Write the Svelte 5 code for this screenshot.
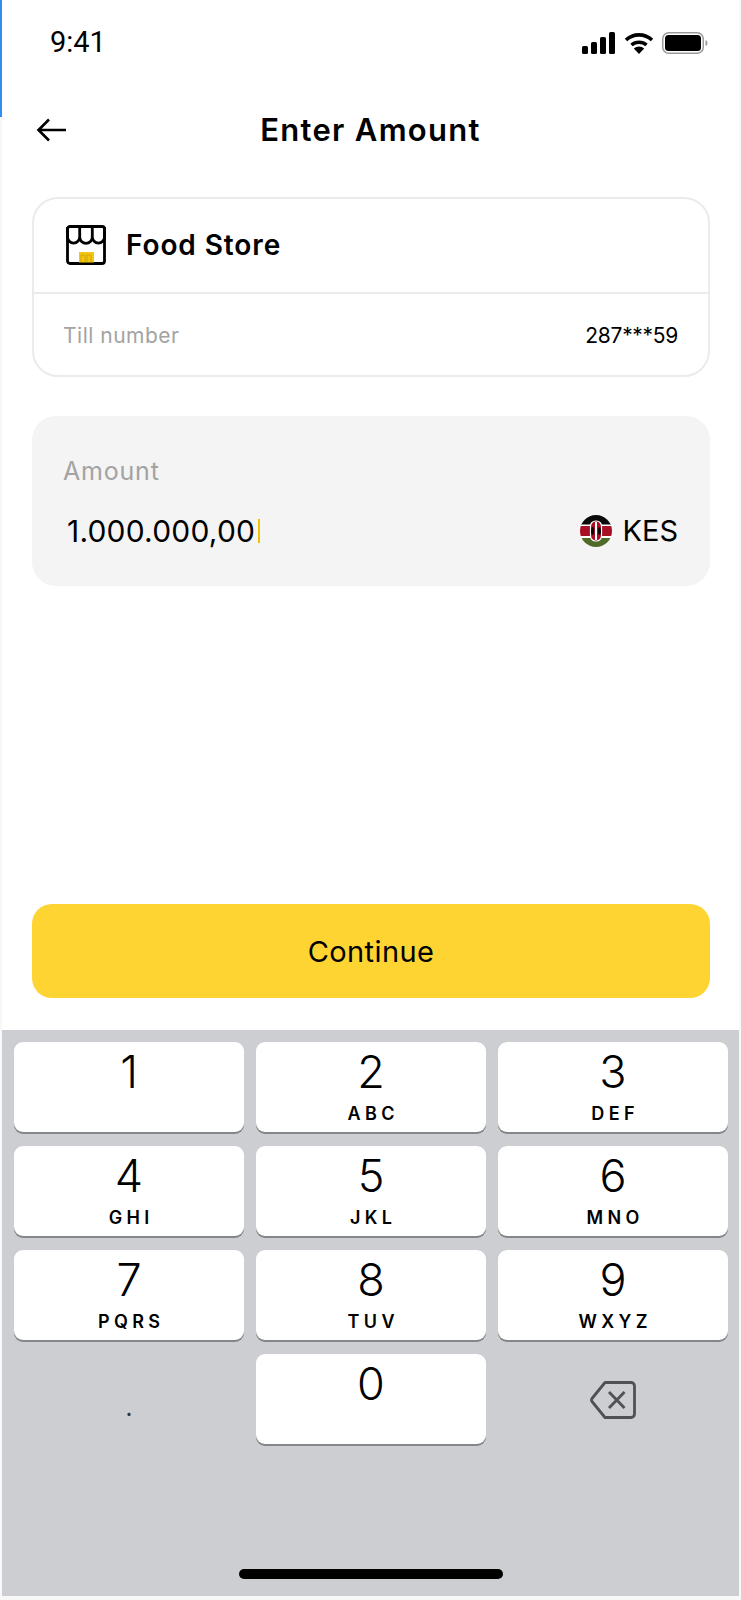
<script>
    // Keypad rows: digit + letters underneath
    const keys = [
        { n: '1', l: '' },
        { n: '2', l: 'ABC' },
        { n: '3', l: 'DEF' },
        { n: '4', l: 'GHI' },
        { n: '5', l: 'JKL' },
        { n: '6', l: 'MNO' },
        { n: '7', l: 'PQRS' },
        { n: '8', l: 'TUV' },
        { n: '9', l: 'WXYZ' }
    ];
</script>

<div class="screen">
    <div class="strip"></div>
    <div class="page">
        <div class="status">
            <span class="time">9:41</span>
            <div class="status-icons">
                <svg width="34" height="22" viewBox="0 0 34 22">
                    <rect x="0" y="14" width="6" height="8" rx="1.5" fill="#000" />
                    <rect x="9" y="10" width="6" height="12" rx="1.5" fill="#000" />
                    <rect x="18" y="5" width="6" height="17" rx="1.5" fill="#000" />
                    <rect x="27" y="0" width="6" height="22" rx="1.5" fill="#000" />
                </svg>
                <svg width="30" height="22" viewBox="0 0 30 22">
                    <path d="M2 8 A19 19 0 0 1 28 8" fill="none" stroke="#000" stroke-width="3.6" />
                    <path d="M7.5 13 A11.5 11.5 0 0 1 22.5 13" fill="none" stroke="#000" stroke-width="3.6" />
                    <path d="M15 22 L9.8 16.6 A7.5 7.5 0 0 1 20.2 16.6 Z" fill="#000" />
                </svg>
                <svg width="46" height="22" viewBox="0 0 46 22">
                    <rect x="0.75" y="0.75" width="40.5" height="20.5" rx="6" fill="none" stroke="#9a9a9a" stroke-width="1.5" />
                    <rect x="3" y="3" width="36" height="16" rx="3.5" fill="#000" />
                    <path d="M43.5 8 C45 8.5 45.5 9.5 45.5 11 C45.5 12.5 45 13.5 43.5 14 Z" fill="#9a9a9a" />
                </svg>
            </div>
        </div>

        <div class="nav">
            <svg class="back" width="32" height="26" viewBox="0 0 32 26">
                <path d="M30 13 H3 M13 2.5 L2.5 13 L13 23.5" fill="none" stroke="#000" stroke-width="2.6" />
            </svg>
            <h1>Enter Amount</h1>
        </div>

        <div class="content">
            <div class="card">
                <div class="store">
                    <svg width="40" height="40" viewBox="0 0 40 40">
                        <rect x="1.5" y="1.5" width="37" height="37" rx="2.5" fill="#fff" stroke="#000" stroke-width="2.8" />
                        <path d="M1.5 2 V12 A6.1 6.1 0 0 0 13.7 12 V2 M13.7 12 A6.1 6.1 0 0 0 26.3 12 V2 M26.3 12 A6.1 6.1 0 0 0 38.5 12 V2" fill="none" stroke="#000" stroke-width="2.8" />
                        <rect x="13" y="27" width="15" height="10.5" fill="#f2c613" />
                        <path d="M15 37 V30 H19 V37 M21 37 V30 H25 V37" fill="none" stroke="#c9a000" stroke-width="0.8" />
                    </svg>
                    <span class="store-name">Food Store</span>
                </div>
                <div class="till">
                    <span class="till-label">Till number</span>
                    <span class="till-value">287***59</span>
                </div>
            </div>

            <div class="amount-box">
                <div class="amount-label">Amount</div>
                <div class="amount-row">
                    <div class="amount-value">1.000.000,00<span class="caret"></span></div>
                    <div class="currency">
                        <svg width="32" height="32" viewBox="0 0 32 32">
                            <defs>
                                <clipPath id="flag-clip"><circle cx="16" cy="16" r="16" /></clipPath>
                            </defs>
                            <g clip-path="url(#flag-clip)">
                                <rect width="32" height="10" fill="#0a0a0a" />
                                <rect y="9.5" width="32" height="13.5" fill="#fff" />
                                <rect y="11" width="32" height="10" fill="#a80f24" />
                                <rect y="23" width="32" height="9" fill="#4f6b2a" />
                                <rect x="10.5" y="6" width="11" height="20" rx="5" fill="#a80f24" stroke="#fff" stroke-width="1.2" />
                                <ellipse cx="12.5" cy="16" rx="1.5" ry="4" fill="#0a0a0a" />
                                <ellipse cx="19.5" cy="16" rx="1.5" ry="4" fill="#0a0a0a" />
                                <rect x="15" y="7" width="2" height="18" fill="#fff" />
                            </g>
                        </svg>
                        <span>KES</span>
                    </div>
                </div>
            </div>

            <button class="continue">Continue</button>
        </div>

        <div class="keyboard">
            <div class="keys">
                {#each keys as key}
                    <div class="key">
                        <span class="digit">{key.n}</span>
                        <span class="letters">{key.l}</span>
                    </div>
                {/each}
                <div class="key-blank dot">.</div>
                <div class="key">
                    <span class="digit">0</span>
                </div>
                <div class="key-blank del">
                    <svg width="46" height="38" viewBox="0 0 46 38">
                        <path d="M15 1.5 H41 A3.5 3.5 0 0 1 44.5 5 V33 A3.5 3.5 0 0 1 41 36.5 H15 L2 20.5 A2.5 2.5 0 0 1 2 17.5 Z" fill="none" stroke="#4f5153" stroke-width="2.8" stroke-linejoin="round" />
                        <path d="M19 11 L34.5 27 M34.5 11 L19 27" fill="none" stroke="#4f5153" stroke-width="2.8" />
                    </svg>
                </div>
            </div>
            <div class="home-bar"></div>
        </div>
    </div>
</div>

<style>
    :global(body) {
        margin: 0;
        background: #f8f8f8;
    }

    .screen {
        position: relative;
        width: 741px;
        height: 1600px;
        padding: 0 2px 4px;
        box-sizing: border-box;
        font-family: Inter, "Liberation Sans", sans-serif;
        color: #000;
    }

    .strip {
        position: absolute;
        left: 0;
        top: 0;
        width: 2px;
        height: 117px;
        background: #2f8df5;
    }

    .page {
        display: flex;
        flex-direction: column;
        height: 100%;
        background: #fff;
    }

    .status {
        display: flex;
        justify-content: space-between;
        align-items: center;
        height: 84px;
        padding: 0 31px 0 48px;
    }

    .time {
        font-family: Roboto, sans-serif;
        font-size: 29px;
        line-height: 1;
    }

    .status-icons {
        display: flex;
        align-items: center;
        gap: 8px;
        margin-top: 2px;
    }

    .nav {
        position: relative;
        display: flex;
        justify-content: center;
        align-items: center;
        height: 88px;
    }

    .back {
        position: absolute;
        left: 34px;
        top: 33px;
    }

    h1 {
        margin: 0;
        font-size: 31px;
        font-weight: 600;
        letter-spacing: 1.3px;
        padding-top: 3px;
        line-height: 92px;
    }

    .content {
        display: flex;
        flex-direction: column;
        flex: 1;
        padding: 25px 29px 32px 30px;
    }

    .card {
        border: 2px solid #ebebeb;
        border-radius: 26px;
        height: 180px;
        box-sizing: border-box;
    }

    .store {
        display: flex;
        align-items: center;
        gap: 20px;
        height: 95px;
        padding: 0 32px 1px;
        box-sizing: border-box;
        border-bottom: 2px solid #ebebeb;
    }

    .store-name {
        font-size: 28px;
        font-weight: 600;
        letter-spacing: 0.9px;
    }

    .till {
        display: flex;
        justify-content: space-between;
        align-items: center;
        height: 82px;
        padding: 0 30px 0 29px;
    }

    .till-label {
        font-size: 21px;
        letter-spacing: 0.5px;
        color: #a3a3a3;
    }

    .till-value {
        font-size: 21px;
        letter-spacing: -0.3px;
    }

    .amount-box {
        margin-top: 39px;
        height: 170px;
        padding: 40px 32px 0 31px;
        box-sizing: border-box;
        background: #f4f4f4;
        border-radius: 24px;
    }

    .amount-label {
        font-size: 25px;
        letter-spacing: 0.8px;
        line-height: 30px;
        color: #a3a3a3;
    }

    .amount-row {
        display: flex;
        justify-content: space-between;
        align-items: center;
        margin-top: 27px;
    }

    .amount-value {
        display: flex;
        align-items: center;
        padding-left: 4px;
        font-size: 30px;
        letter-spacing: 0.2px;
        line-height: 36px;
    }

    .caret {
        width: 2px;
        height: 24px;
        margin-left: 3px;
        background: #f2c200;
    }

    .currency {
        display: flex;
        align-items: center;
        gap: 10px;
        font-size: 29px;
        line-height: 36px;
    }

    .continue {
        margin-top: auto;
        height: 94px;
        border: 0;
        border-radius: 20px;
        background: #fdd431;
        color: #000;
        font-family: inherit;
        font-size: 29px;
        letter-spacing: 0.4px;
    }

    .keyboard {
        display: flex;
        flex-direction: column;
        height: 566px;
        background: #cdced2;
    }

    .keys {
        display: grid;
        grid-template-columns: repeat(3, 230px);
        grid-auto-rows: 90px;
        gap: 14px 12px;
        padding: 12px 11px 0 12px;
    }

    .key {
        display: flex;
        flex-direction: column;
        align-items: center;
        background: #fff;
        border-radius: 9px;
        box-shadow: 0 2px 0 #85868a;
        font-family: Inter, Roboto, sans-serif;
    }

    .digit {
        font-size: 45px;
        font-weight: 300;
        line-height: 59px;
    }

    .letters {
        font-size: 18px;
        font-weight: 600;
        letter-spacing: 4.4px;
        margin-right: -4.4px;
        line-height: 25px;
    }

    .key-blank {
        display: flex;
        justify-content: center;
    }

    .dot {
        font-family: Inter, sans-serif;
        font-size: 24px;
        padding-top: 42px;
        line-height: 24px;
        color: #333;
    }

    .del {
        padding-top: 27px;
    }

    .home-bar {
        align-self: center;
        width: 264px;
        height: 10px;
        margin-top: auto;
        margin-bottom: 17px;
        border-radius: 5px;
        background: #000;
    }
</style>
